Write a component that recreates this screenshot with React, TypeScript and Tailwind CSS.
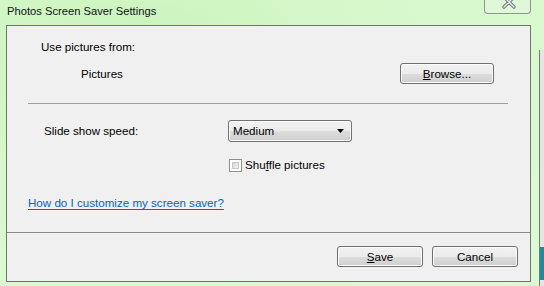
import React from 'react'

const font = { fontFamily: '"Segoe UI", "Liberation Sans", Arial, sans-serif' }

function VistaButton({ children, className = '' }: { children: React.ReactNode; className?: string }) {
  return (
    <button
      className={`h-[21px] w-[86px] rounded-[3px] border border-[#707070] text-[11.6px] text-black
                  bg-[linear-gradient(to_bottom,#f2f2f2_0%,#ebebeb_50%,#dddddd_51%,#cfcfcf_100%)]
                  shadow-[inset_0_0_0_1px_#fcfcfc] flex items-center justify-center leading-none ${className}`}
    >
      {children}
    </button>
  )
}

export default function App() {
  return (
    <div
      style={font}
      className="w-[544px] h-[286px] overflow-hidden flex bg-[radial-gradient(ellipse_at_25%_20%,#c9f3bb_0%,#d6f8cb_40%,#dcfad2_100%)]"
    >
      {/* dialog window */}
      <div className="w-[539px] flex flex-col">
        {/* title bar */}
        <div className="h-[25px] flex items-start justify-between">
          <div className="pl-[7px] pt-[3px] text-[11.2px] leading-[16px] text-[#111]">
            Photos Screen Saver Settings
          </div>
          <div className="mr-[8px] w-[47px] h-[14px] rounded-b-[4px] border border-t-0 border-[#8a9a8a] bg-[#e2f8dc]/70 flex justify-center overflow-hidden">
            <svg width="14" height="9" viewBox="0 4 14 9" className="ml-[2px]">
              <path d="M2 1 L12 11 M12 1 L2 11" stroke="#6a707a" strokeWidth="3.2" strokeLinecap="round" />
              <path d="M2 1 L12 11 M12 1 L2 11" stroke="#eef0f4" strokeWidth="1.4" strokeLinecap="round" />
            </svg>
          </div>
        </div>

        {/* client panel */}
        <div className="ml-[6px] w-[525px] h-[257px] border border-[#6d786d] bg-[#f0f0f0] flex flex-col text-[11.6px] leading-[16px] text-black">
          <div className="h-[206px] flex flex-col">
            <div className="mt-[13px] pl-[34px]">Use pictures from:</div>

            <div className="mt-[8px] h-[21px] pl-[74px] pr-[36px] flex items-center justify-between">
              <span>Pictures</span>
              <VistaButton className="w-[94px]">
                <span><span className="underline">B</span>rowse...</span>
              </VistaButton>
            </div>

            <div className="mt-[19px] ml-[21px] mr-[22px] h-px bg-[#a0a0a0]" />

            <div className="mt-[16px] h-[22px] flex items-center">
              <span className="pl-[37px] w-[221px]">Slide show speed:</span>
              <div className="w-[124px] h-[22px] rounded-[3px] border border-[#707070] shadow-[inset_0_0_0_1px_#fcfcfc]
                              bg-[linear-gradient(to_bottom,#f2f2f2_0%,#ebebeb_50%,#dddddd_51%,#cfcfcf_100%)]
                              flex items-center justify-between pl-[4px] pr-[7px]">
                <span>Medium</span>
                <svg width="7" height="4" viewBox="0 0 7 4">
                  <path d="M0 0 H7 L3.5 4 Z" fill="#000" />
                </svg>
              </div>
            </div>

            <div className="mt-[13px] h-[20px] pl-[222px] flex items-center gap-[3px]">
              <span className="w-[13px] h-[13px] border border-[#8f8f8f] bg-white p-[2px] flex">
                <span className="flex-1 border border-[#c6c6c6] bg-[linear-gradient(135deg,#d4d4d4,#f6f6f6)]" />
              </span>
              <span>
                Shu<span className="underline">f</span>fle pictures
              </span>
            </div>

            <div className="mt-[20px] pl-[21px]">
              <span className="text-[#0066cc] underline underline-offset-[2px]">How do I customize my screen saver?</span>
            </div>
          </div>

          {/* footer */}
          <div className="flex-1 border-t border-[#8a8a8a] flex items-start justify-end gap-[9px] pt-[13px] pr-[12px]">
            <VistaButton>
              <span><span className="underline">S</span>ave</span>
            </VistaButton>
            <VistaButton>Cancel</VistaButton>
          </div>
        </div>
      </div>

      {/* edge of the window behind */}
      <div className="flex-1 flex flex-col">
        <div className="h-[50px]" />
        <div className="flex-1 border-l border-[#6f7d6f] bg-[#e4e4e4] flex flex-col">
          <div className="h-[197px]" />
          <div className="h-[33px] bg-[#1a8ea0]" />
        </div>
      </div>
    </div>
  )
}
